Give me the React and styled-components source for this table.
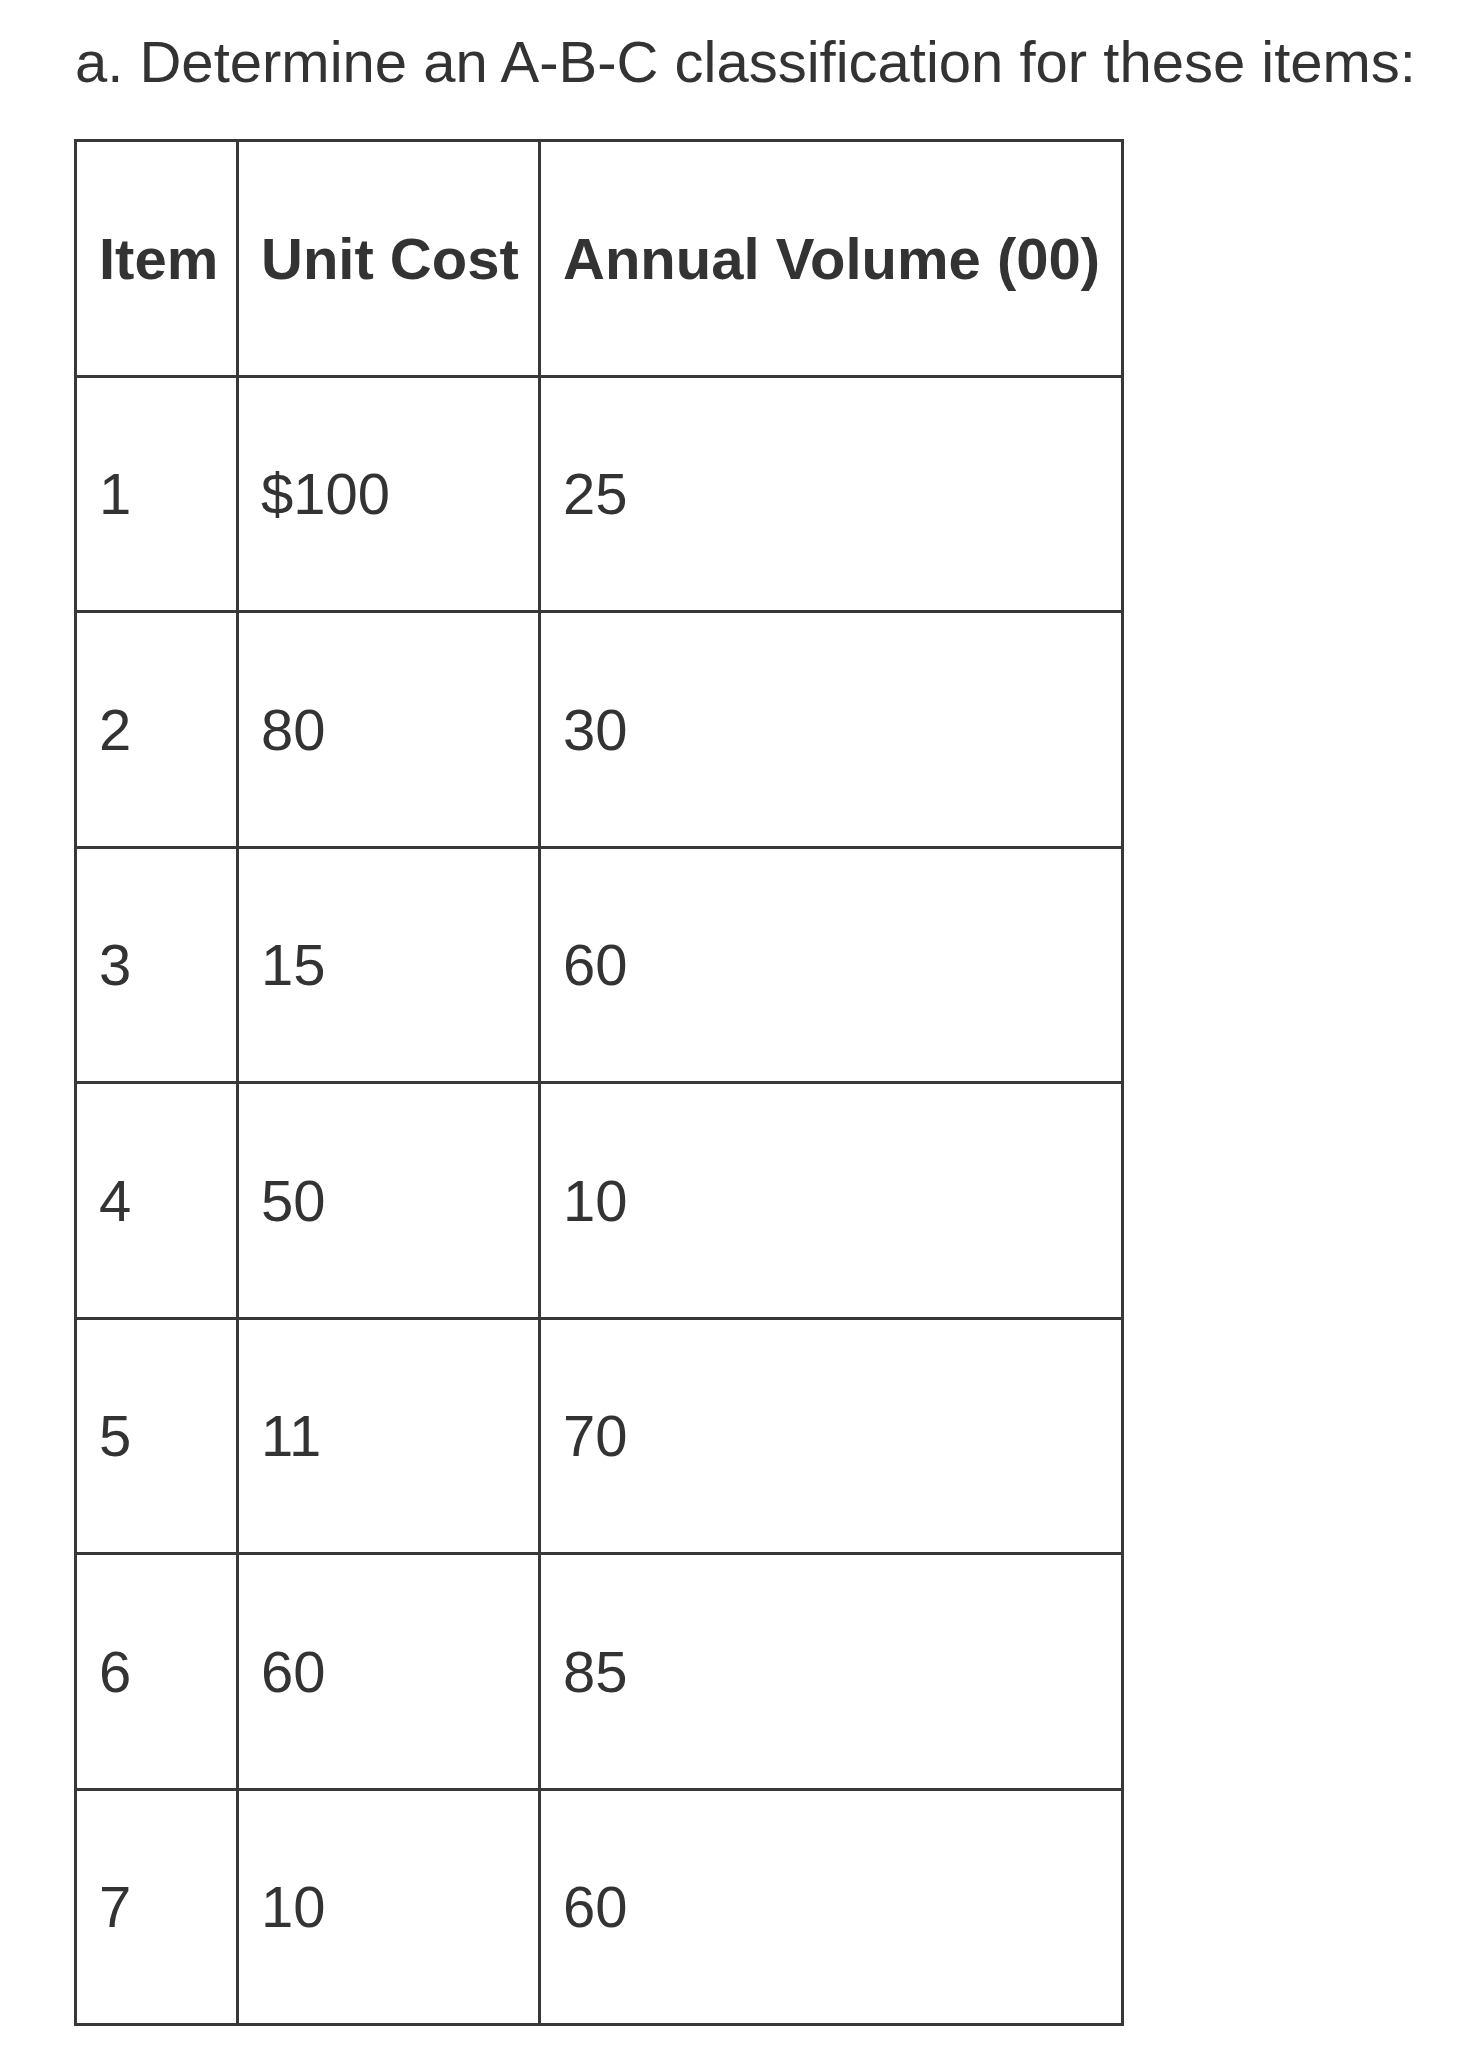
import React from "react";
import styled, { createGlobalStyle } from "styled-components";

const GlobalStyle = createGlobalStyle`
  html, body {
    margin: 0;
    padding: 0;
    background: #ffffff;
  }
  body {
    font-family: "Liberation Sans", Arial, sans-serif;
    color: #333333;
  }
`;

const Page = styled.div`
  padding: 30px 0 0 74px;
`;

const Question = styled.p`
  margin: 0 0 45px 1px;
  font-size: 58px;
  line-height: 64px;
  color: #333333;
  white-space: nowrap;
`;

const Table = styled.table`
  border-collapse: collapse;
  table-layout: fixed;
  width: 1047px;
  font-size: 58px;
  color: #333333;
`;

const Col = styled.col`
  width: ${({ w }) => w}px;
`;

const Row = styled.tr`
  height: 235.5px;
`;

const Cell = styled.td`
  border: 3px solid #383838;
  padding: 0 22px;
  vertical-align: middle;
  text-align: left;
  font-weight: ${({ head }) => (head ? 700 : 400)};
  white-space: nowrap;
`;

const rows = [
  ["1", "$100", "25"],
  ["2", "80", "30"],
  ["3", "15", "60"],
  ["4", "50", "10"],
  ["5", "11", "70"],
  ["6", "60", "85"],
  ["7", "10", "60"],
];

const App = () => {
  return (
    <>
      <GlobalStyle />
      <Page>
        <Question>a. Determine an A-B-C classification for these items:</Question>
        <Table>
          <colgroup>
            <Col w={162} />
            <Col w={302} />
            <Col w={583} />
          </colgroup>
          <tbody>
            <Row>
              <Cell head>Item</Cell>
              <Cell head>Unit Cost</Cell>
              <Cell head>Annual Volume (00)</Cell>
            </Row>
            {rows.map((r) => (
              <Row key={r[0]}>
                {r.map((v, i) => (
                  <Cell key={i}>{v}</Cell>
                ))}
              </Row>
            ))}
          </tbody>
        </Table>
      </Page>
    </>
  );
};

export default App;
